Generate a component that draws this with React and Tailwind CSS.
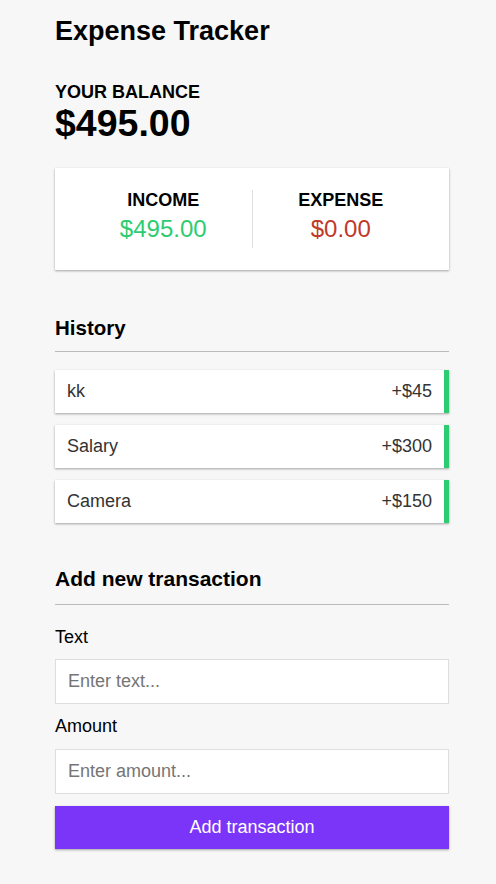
import React from 'react';

const transactions = [
    { id: 1, text: 'kk', amount: 45 },
    { id: 2, text: 'Salary', amount: 300 },
    { id: 3, text: 'Camera', amount: 150 },
];

const cardShadow = 'shadow-[0_1px_3px_rgba(0,0,0,0.12),0_1px_2px_rgba(0,0,0,0.24)]';

const App = () => {
    const income = transactions.filter((t) => t.amount > 0).reduce((a, t) => a + t.amount, 0);
    const expense = transactions.filter((t) => t.amount < 0).reduce((a, t) => a - t.amount, 0);
    const balance = income - expense;

    return (
        <div className="min-h-screen bg-[#f7f7f7] font-['Liberation_Sans',Arial,sans-serif] text-black">
            <div className="ml-[55px] w-[394px] pt-[15px] pb-10">
                <h2 className="text-[27px] leading-[32px] font-bold">Expense Tracker</h2>

                {/* Balance */}
                <h4 className="mt-[34px] text-[18px] leading-[22px] font-bold uppercase">Your Balance</h4>
                <h1 className="text-[37.5px] leading-[41px] font-bold">${balance.toFixed(2)}</h1>

                {/* Income / Expense */}
                <div className={`mt-[24px] flex bg-white px-5 py-[22px] ${cardShadow}`}>
                    <div className="flex-1 border-r border-[#dedede] text-center">
                        <h4 className="text-[18px] leading-[20px] font-bold uppercase">Income</h4>
                        <p className="my-[5px] text-[24px] leading-[28px] text-[#2ecc71]">${income.toFixed(2)}</p>
                    </div>
                    <div className="flex-1 text-center">
                        <h4 className="text-[18px] leading-[20px] font-bold uppercase">Expense</h4>
                        <p className="my-[5px] text-[24px] leading-[28px] text-[#c0392b]">${expense.toFixed(2)}</p>
                    </div>
                </div>

                {/* History */}
                <h3 className="mt-[46px] border-b border-[#bbb] pb-[11px] text-[20.5px] leading-[24px] font-bold">History</h3>
                <ul className="mt-[18px] flex flex-col gap-[12px]">
                    {transactions.map((t) => (
                        <li
                            key={t.id}
                            className={`flex h-[43px] items-center justify-between border-r-[5px] border-[#2ecc71] bg-white px-3 text-[18px] text-[#333] ${cardShadow}`}
                        >
                            <span>{t.text}</span>
                            <span>{t.amount < 0 ? '-' : '+'}${Math.abs(t.amount)}</span>
                        </li>
                    ))}
                </ul>

                {/* Add transaction */}
                <h3 className="mt-[44px] border-b border-[#bbb] pb-[13px] text-[21px] leading-[24px] font-bold">Add new transaction</h3>
                <form onSubmit={(e) => e.preventDefault()}>
                    <label className="mt-[22px] block text-[18px] leading-[21px]">Text</label>
                    <input
                        type="text"
                        placeholder="Enter text..."
                        className="mt-[11px] block h-[45px] w-full border border-[#dedede] bg-white px-3 text-[18px] placeholder:text-[#757575] focus:outline-none"
                    />
                    <label className="mt-[12px] block text-[18px] leading-[21px]">Amount</label>
                    <input
                        type="number"
                        placeholder="Enter amount..."
                        className="mt-[12px] block h-[45px] w-full border border-[#dedede] bg-white px-3 text-[18px] placeholder:text-[#757575] focus:outline-none"
                    />
                    <button
                        type="submit"
                        className={`mt-[12px] block h-[43px] w-full bg-[#7b35f9] text-[18px] text-white ${cardShadow}`}
                    >
                        Add transaction
                    </button>
                </form>
            </div>
        </div>
    );
};

export default App;
